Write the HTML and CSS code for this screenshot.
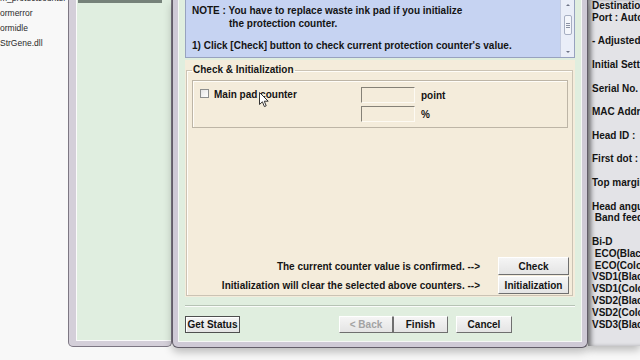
FILE: index.html
```html
<!DOCTYPE html>
<html lang="en">
<head>
  <meta charset="UTF-8">
  <title>Adjustment Program - Waste ink pad counter</title>
  <link rel="stylesheet" href="styles.css">
</head>
<body>
  <div class="desk">
    <div class="explorer">
      <div class="file">m_protectcounter</div>
      <div class="file">ormerror</div>
      <div class="file">ormidle</div>
      <div class="file">StrGene.dll</div>
    </div>

    <div class="back-win">
      <div class="back-client"><div class="back-bar"></div></div>
    </div>

    <div class="dialog">
      <div class="client">
        <div class="note">
          <div class="note-text">
            <p>NOTE : You have to replace waste ink pad if you initialize<br><span class="indent">the protection counter.</span></p>
            <p class="step">1) Click [Check] button to check current protection counter's value.</p>
          </div>
          <div class="vscroll">
            <span class="arrow up"></span>
            <span class="thumb"><i></i><i></i><i></i></span>
            <span class="arrow down"></span>
          </div>
        </div>

        <div class="panel">
          <fieldset class="group">
            <legend>Check &amp; Initialization</legend>
            <div class="counters">
              <div class="pad-item"><span class="checkbox"></span>Main pad counter</div>
              <div class="fields">
                <div class="field-row"><span class="field"></span>point</div>
                <div class="field-row"><span class="field"></span>%</div>
              </div>
              <svg class="cursor" width="10" height="16" viewBox="0 0 10 16">
                <path d="M0.5 0.5 L0.5 12.5 L3.4 9.8 L5.4 14.6 L7.2 13.8 L5.3 9.2 L9.2 9.2 Z" fill="#fff" stroke="#333" stroke-width="1" stroke-linejoin="round"/>
              </svg>
            </div>
            <div class="actions">
              <div class="action-row"><span>The current counter value is confirmed. --&gt;</span><button class="btn">Check</button></div>
              <div class="action-row"><span>Initialization will clear the selected above counters. --&gt;</span><button class="btn">Initialization</button></div>
            </div>
          </fieldset>
        </div>

        <div class="separator"></div>

        <div class="footer">
          <button class="btn btn-status">Get Status</button>
          <div class="nav">
            <button class="btn btn-back" disabled>&lt; Back</button>
            <button class="btn btn-finish">Finish</button>
            <button class="btn btn-cancel">Cancel</button>
          </div>
        </div>
      </div>
    </div>

    <div class="side-win">
      <div class="side-text">Destination
Port : Auto

- Adjusted

Initial Setting

Serial No.

MAC Address

Head ID :

First dot :

Top margin

Head angular
 Band feed

Bi-D
 ECO(Black)
 ECO(Color)
VSD1(Black)
VSD1(Color)
VSD2(Black)
VSD2(Color)
VSD3(Black)</div>
    </div>
  </div>
</body>
</html>
```

FILE: styles.css
```css
body {
  margin: 0;
  background: #f8f8f8;
  font-family: "Liberation Sans", Arial, sans-serif;
  color: #141414;
}
.desk {
  display: flex;
  width: 640px;
  height: 360px;
  overflow: hidden;
  align-items: flex-start;
}

/* explorer list on the left */
.explorer {
  width: 68px;
  flex-shrink: 0;
  margin-top: -9px;
  font-size: 8.5px;
  line-height: 15px;
  color: #2a2a2a;
  white-space: nowrap;
  overflow: hidden;
}

/* window behind the dialog */
.back-win {
  width: 104px;
  height: 347px;
  flex-shrink: 0;
  box-sizing: border-box;
  background: #d4cfd9;
  border: 1px solid #7d7783;
  border-top: none;
  border-radius: 0 0 5px 5px;
  padding: 0 0 6px 7px;
}
.back-client {
  height: 100%;
  background: #e0eee0;
  border-left: 1px solid #fbfbfb;
  border-bottom: 1px solid #fbfbfb;
}
.back-bar {
  width: 84px;
  height: 3px;
  margin-left: 1px;
  background: #76827a;
}

/* main dialog */
.dialog {
  width: 416px;
  height: 348px;
  flex-shrink: 0;
  box-sizing: border-box;
  background: #cfcad6;
  border: 1px solid #625d68;
  border-top: none;
  border-radius: 0 0 6px 6px;
  padding: 0 5px 5px;
  box-shadow: 0 4px 8px rgba(0, 0, 0, 0.25);
  position: relative;
  z-index: 2;
}
.client {
  height: 100%;
  box-sizing: border-box;
  background: #e0eedf;
  border: 1px solid #f6f8f6;
  border-top: none;
  padding: 0 6px;
  font-size: 10px;
  font-weight: bold;
}

.note {
  display: flex;
  height: 58px;
  box-sizing: border-box;
  background: #c6d3f2;
  border: 1px solid #97a2bf;
  border-top: none;
}
.note-text {
  flex: 1;
  padding: 4px 0 0 6px;
  line-height: 13px;
}
.note-text p {
  margin: 0;
}
.note-text .indent {
  padding-left: 37px;
}
.note-text .step {
  margin-top: 9px;
}
.vscroll {
  width: 13px;
  background: #eaeef8;
  border-left: 1px solid #c3cbe0;
  display: flex;
  flex-direction: column;
  align-items: center;
}
.arrow {
  width: 0;
  height: 0;
  border-left: 2px solid transparent;
  border-right: 2px solid transparent;
}
.arrow.up {
  margin-top: 4px;
  border-bottom: 2px solid #6d7386;
}
.arrow.down {
  margin-top: auto;
  margin-bottom: 4px;
  border-top: 2px solid #6d7386;
}
.thumb {
  margin-top: 9px;
  width: 8px;
  height: 20px;
  box-sizing: border-box;
  border: 1px solid #a7afc2;
  border-radius: 2px;
  background: #f4f6fb;
  display: flex;
  flex-direction: column;
  justify-content: center;
  align-items: center;
  gap: 1px;
}
.thumb i {
  width: 4px;
  height: 1px;
  background: #8a91a3;
}

.panel {
  margin-top: 2px;
  background: #f4ecdb;
  padding: 4px 2px 1px 1px;
}
.group {
  margin: 0;
  min-width: 0;
  border: 1px solid #cbc3b4;
  box-shadow: inset 1px 1px 0 #fffdf8;
  padding: 0 3px 1px 5px;
}
.group legend {
  padding: 0 1px;
  line-height: 12px;
}

.counters {
  position: relative;
  display: flex;
  height: 48px;
  box-sizing: border-box;
  margin: 4px 1px 0 0;
  border: 1px solid #bdb5a6;
  box-shadow: inset 1px 1px 0 #fffdf8;
  padding: 6px 6px 5px 7px;
}
.pad-item {
  width: 161px;
  display: flex;
  align-items: flex-start;
  gap: 5px;
  padding-top: 2px;
  line-height: 12px;
}
.checkbox {
  width: 9px;
  height: 9px;
  box-sizing: border-box;
  border: 1px solid #8c8e8e;
  background: linear-gradient(135deg, #e4e4e4, #ffffff);
}
.fields {
  display: flex;
  flex-direction: column;
  gap: 3px;
}
.field-row {
  display: flex;
  align-items: center;
  gap: 6px;
  height: 16px;
}
.field {
  width: 54px;
  height: 16px;
  box-sizing: border-box;
  border-top: 1px solid #858177;
  border-left: 1px solid #858177;
  border-right: 1px solid #fdfaf3;
  border-bottom: 1px solid #fdfaf3;
}
.cursor {
  position: absolute;
  left: 66px;
  top: 11px;
}

.actions {
  margin-top: 129px;
  display: flex;
  flex-direction: column;
  align-items: flex-end;
  gap: 1px;
}
.action-row {
  display: flex;
  align-items: center;
  gap: 18px;
}
.action-row .btn {
  width: 71px;
  height: 18px;
}

.btn {
  font-family: "Liberation Sans", Arial, sans-serif;
  font-size: 10px;
  font-weight: bold;
  color: #141414;
  background: linear-gradient(#f5f5f5, #e4e4e4);
  border: 1px solid;
  border-color: #ffffff #6f6f6f #6f6f6f #ffffff;
  padding: 0;
  margin: 0;
}
.btn:disabled {
  color: #a3a3a3;
}

.separator {
  margin-top: 8px;
  border-top: 1px solid #b6c3b5;
  border-bottom: 1px solid #fafcfa;
}
.footer {
  display: flex;
  margin-top: 9px;
}
.footer .btn {
  height: 17px;
}
.btn-status {
  width: 55px;
  border-color: #4f4f4f;
  box-shadow: inset 1px 1px 0 #fff;
}
.nav {
  display: flex;
  margin-left: 99px;
}
.btn-back {
  width: 54px;
}
.btn-finish {
  width: 55px;
  border-left-color: #6f6f6f;
}
.btn-cancel {
  width: 56px;
  margin-left: 8px;
}

/* window on the right */
.side-win {
  flex: 1;
  height: 346px;
  background: #e3e3e7;
  padding-left: 4px;
  box-shadow: inset 4px 0 4px -1px rgba(0, 0, 0, 0.4), 0 4px 8px rgba(0, 0, 0, 0.25);
  overflow: hidden;
}
.side-text {
  white-space: pre;
  font-size: 10px;
  font-weight: bold;
  line-height: 11.8px;
}
```
